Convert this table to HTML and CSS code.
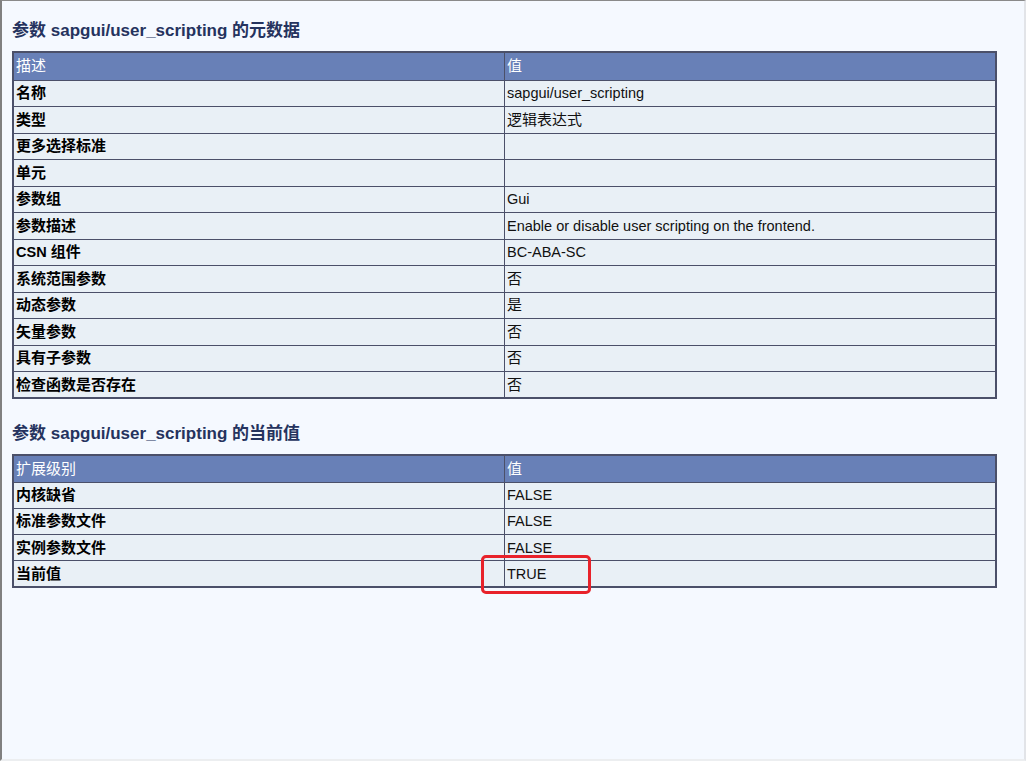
FILE: index.html
```html
<!DOCTYPE html>
<html lang="zh">
<head>
<meta charset="utf-8">
<title>参数 sapgui/user_scripting</title>
<link rel="stylesheet" href="styles.css">
</head>
<body>
<div class="page">
  <h2 class="title">参数 sapgui/user_scripting 的元数据</h2>
  <table class="grid meta">
    <thead>
      <tr><th><span class="zh">描述</span></th><th><span class="zh">值</span></th></tr>
    </thead>
    <tbody>
      <tr><td class="lbl"><span class="zh">名称</span></td><td>sapgui/user_scripting</td></tr>
      <tr><td class="lbl"><span class="zh">类型</span></td><td><span class="zh">逻辑表达式</span></td></tr>
      <tr><td class="lbl"><span class="zh">更多选择标准</span></td><td></td></tr>
      <tr><td class="lbl"><span class="zh">单元</span></td><td></td></tr>
      <tr><td class="lbl"><span class="zh">参数组</span></td><td>Gui</td></tr>
      <tr><td class="lbl"><span class="zh">参数描述</span></td><td>Enable or disable user scripting on the frontend.</td></tr>
      <tr><td class="lbl">CSN <span class="zh">组件</span></td><td>BC-ABA-SC</td></tr>
      <tr><td class="lbl"><span class="zh">系统范围参数</span></td><td><span class="zh">否</span></td></tr>
      <tr><td class="lbl"><span class="zh">动态参数</span></td><td><span class="zh">是</span></td></tr>
      <tr><td class="lbl"><span class="zh">矢量参数</span></td><td><span class="zh">否</span></td></tr>
      <tr><td class="lbl"><span class="zh">具有子参数</span></td><td><span class="zh">否</span></td></tr>
      <tr><td class="lbl"><span class="zh">检查函数是否存在</span></td><td><span class="zh">否</span></td></tr>
    </tbody>
  </table>

  <h2 class="title second">参数 sapgui/user_scripting 的当前值</h2>
  <div class="wrap">
    <table class="grid current">
      <thead>
        <tr><th><span class="zh">扩展级别</span></th><th><span class="zh">值</span></th></tr>
      </thead>
      <tbody>
        <tr><td class="lbl"><span class="zh">内核缺省</span></td><td>FALSE</td></tr>
        <tr><td class="lbl"><span class="zh">标准参数文件</span></td><td>FALSE</td></tr>
        <tr><td class="lbl"><span class="zh">实例参数文件</span></td><td>FALSE</td></tr>
        <tr><td class="lbl"><span class="zh">当前值</span></td><td>TRUE</td></tr>
      </tbody>
    </table>
    <div class="highlight"></div>
  </div>
</div>
</body>
</html>
```
FILE: styles.css
```css
html, body {
  margin: 0;
  padding: 0;
}
body {
  background: #f5f9ff;
  font-family: "Liberation Sans", "Noto Sans CJK SC", sans-serif;
}
.page {
  box-sizing: border-box;
  width: 1026px;
  height: 761px;
  border-top: 1px solid #8a8a8a;
  border-left: 2px solid #808080;
  border-right: 2px solid #e2e4e8;
  border-bottom: 2px solid #eceef0;
  padding: 0 0 0 10px;
  background: #f5f9ff;
}
.title {
  margin: 20px 0 10px 0;
  font-size: 17px;
  line-height: 20px;
  font-weight: bold;
  color: #25335e;
}
.title.second {
  margin: 25px 0 10px 0;
}
.grid {
  width: 985px;
  border-collapse: collapse;
  border: 2px solid #4b5069;
  table-layout: fixed;
  font-size: 14.5px;
  color: #111;
}
.grid th, .grid td {
  box-sizing: border-box;
  width: 50%;
  height: 26px;
  padding: 0 2px;
  border: 1px solid #4b5069;
  text-align: left;
  vertical-align: middle;
  line-height: 18px;
  background: #e9f0f6;
}
.grid.meta td {
  height: 26.5px;
}
.grid th {
  background: #6880b7;
  color: #ffffff;
  font-weight: normal;
  height: 28px;
}
.grid.current th {
  height: 27px;
}
.grid.current td {
  height: 26.3px;
}
.grid td.lbl {
  font-weight: bold;
  color: #000;
}
.zh {
  font-size: 15px;
}
.wrap {
  position: relative;
  width: 985px;
}
.highlight {
  position: absolute;
  left: 469px;
  top: 101px;
  width: 110px;
  height: 39px;
  box-sizing: border-box;
  border: 3px solid #e8222a;
  border-radius: 5px;
}
```
